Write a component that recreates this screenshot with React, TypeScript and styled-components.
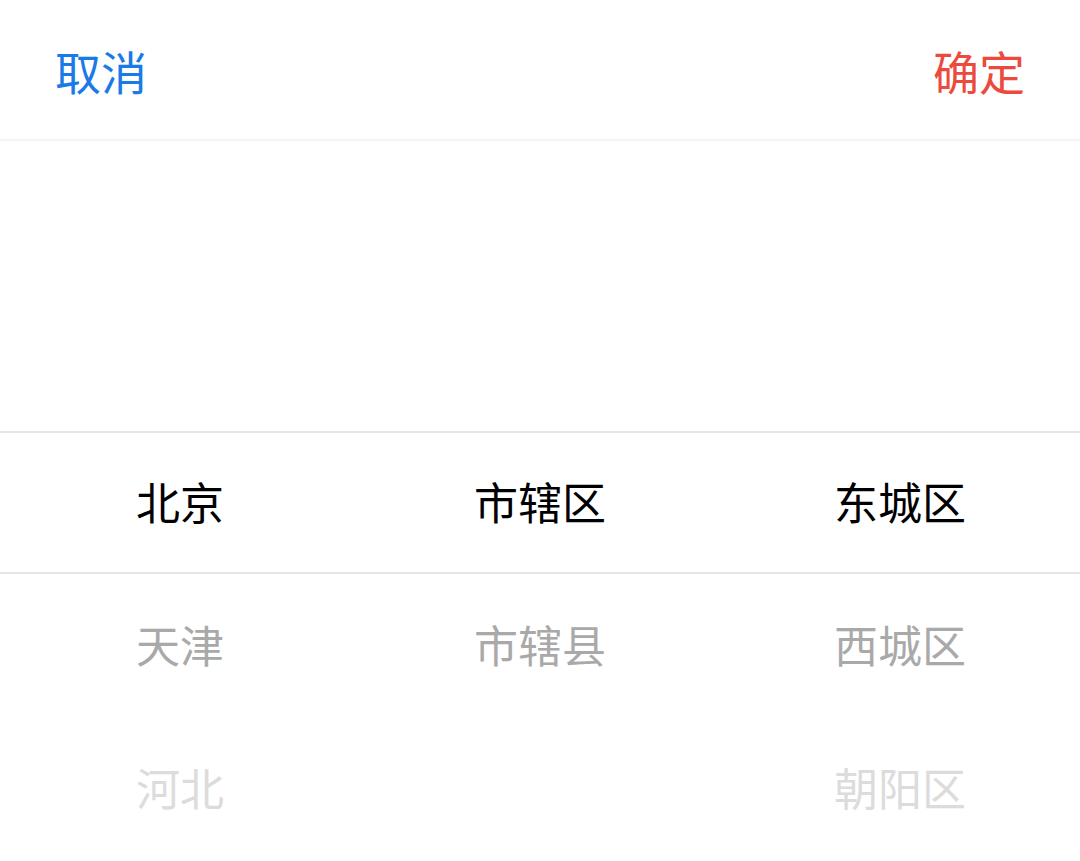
import React from "react";
import styled, { createGlobalStyle } from "styled-components";

const Global = createGlobalStyle`
  html, body { margin: 0; padding: 0; background: #fff; }
  body { font-family: "Noto Sans CJK SC", "Noto Sans", sans-serif; }
`;

const Page = styled.div`
  width: 1080px;
  height: 861px;
  overflow: hidden;
  background: #fff;
  display: flex;
  flex-direction: column;
`;

const Toolbar = styled.div`
  height: 139px;
  border-bottom: 2px solid #f4f4f4;
  display: flex;
  align-items: center;
  justify-content: space-between;
  padding: 0 55px 0 55px;
`;

const ActionButton = styled.button<{ $tone: "cancel" | "confirm" }>`
  border: none;
  background: none;
  padding: 0;
  font-family: "Noto Sans CJK SC", sans-serif;
  font-size: 46px;
  line-height: 1;
  margin-top: 0;
  color: ${(p) => (p.$tone === "cancel" ? "#1a7ae6" : "#ec4a3c")};
`;

const Picker = styled.div`
  flex: 1;
  display: grid;
  grid-template-columns: repeat(3, 1fr);
  padding-top: 4px;
`;

const Column = styled.div`
  display: flex;
  flex-direction: column;
`;

const Row = styled.div<{ $level: number }>`
  height: 143px;
  box-sizing: border-box;
  padding-bottom: 4px;
  display: flex;
  align-items: center;
  justify-content: center;
  font-size: 44px;
  font-family: "Noto Sans CJK SC", sans-serif;
  color: ${(p) => (p.$level === 0 ? "#000" : p.$level === 1 ? "#a9a9a9" : "#dcdcdc")};
  ${(p) =>
    p.$level === 0
      ? "border-top: 2px solid #e6e6e6; border-bottom: 2px solid #e6e6e6;"
      : ""}
`;

const columns: string[][] = [
  ["北京", "天津", "河北"],
  ["市辖区", "市辖县", ""],
  ["东城区", "西城区", "朝阳区"],
];

export default function App() {
  return (
    <Page>
      <Global />
      <Toolbar>
        <ActionButton $tone="cancel">取消</ActionButton>
        <ActionButton $tone="confirm">确定</ActionButton>
      </Toolbar>
      <Picker>
        {columns.map((items, ci) => (
          <Column key={ci}>
            <Row $level={-1} />
            <Row $level={-1} />
            {items.map((t, i) => (
              <Row key={i} $level={i}>
                {t}
              </Row>
            ))}
          </Column>
        ))}
      </Picker>
    </Page>
  );
}
